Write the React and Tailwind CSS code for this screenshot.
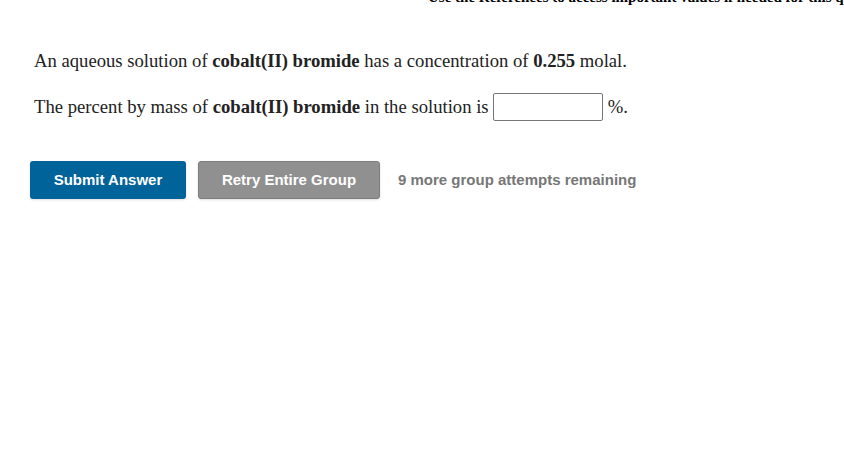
import React from 'react';

export default function App() {
  return (
    <div className="min-h-screen bg-white" style={{ fontFamily: '"Liberation Serif", "Times New Roman", serif' }}>
      <div className="h-[5px] overflow-hidden relative">
        <p className="absolute left-[428px] top-[-11px] whitespace-nowrap text-[15px] leading-[17px] font-bold text-black">
          Use the References to access important values if needed for this question.
        </p>
      </div>
      <div className="pl-[34px] pt-[45px] text-[18.67px] text-[#222]">
        <p className="leading-[22px]">
          An aqueous solution of <b>cobalt(II) bromide</b> has a concentration of <b>0.255</b> molal.
        </p>
        <p className="mt-[21px] flex items-center leading-[22px]">
          <span>The percent by mass of <b>cobalt(II) bromide</b> in the solution is</span>
          <input
            type="text"
            className="ml-[4px] h-[28px] w-[110px] rounded-[2px] border border-[#767676] bg-white"
          />
          <span className="ml-[5px]">%.</span>
        </p>
      </div>
      <div
        className="mt-[40px] flex items-center pl-[30px]"
        style={{ fontFamily: '"Liberation Sans", Arial, sans-serif' }}
      >
        <button className="h-[38px] w-[156px] rounded-[3px] bg-[#00639a] text-[15px] font-bold text-white shadow-sm">
          Submit Answer
        </button>
        <button className="ml-[12px] h-[38px] w-[182px] rounded-[3px] border border-[#7d7d7d] bg-[#909090] text-[15px] font-bold text-white shadow-sm">
          Retry Entire Group
        </button>
        <span className="ml-[18px] text-[15px] font-bold text-[#777]">9 more group attempts remaining</span>
      </div>
    </div>
  );
}
